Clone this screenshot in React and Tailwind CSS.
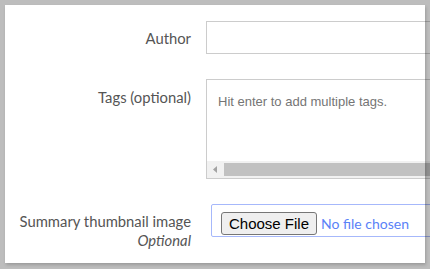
export default function App() {
  return (
    <div className="relative w-[430px] h-[269px] overflow-hidden bg-white font-['Lato',sans-serif] text-[14.8px] text-[#555]">
      <div className="flex flex-col gap-[25px] pt-[21px]">
        <div className="flex">
          <label className="w-[191px] shrink-0 pt-[7px] text-right leading-5">Author</label>
          <input type="text" className="ml-[15px] h-[33px] w-[260px] shrink-0 border border-[#cccccc] bg-white outline-none" />
        </div>

        <div className="flex">
          <label className="w-[191px] shrink-0 pt-[8px] text-right leading-5">Tags (optional)</label>
          <div className="ml-[15px] flex h-[100px] w-[260px] shrink-0 flex-col border border-[#cccccc] bg-white">
            <textarea
              placeholder="Hit enter to add multiple tags."
              className="flex-1 resize-none overflow-hidden px-[11px] pt-[14px] font-['Liberation_Sans',Arial,sans-serif] text-[13px] leading-[15px] outline-none placeholder:text-[#757575]"
            />
            <div className="flex h-[17px] shrink-0 bg-[#f1f1f1]">
              <div className="flex w-[17px] shrink-0 items-center justify-center">
                <svg width="5" height="7" viewBox="0 0 5 7">
                  <path d="M4 0 L0 3.5 L4 7 Z" fill="#a3a3a3" />
                </svg>
              </div>
              <div className="my-[2px] flex-1 bg-[#c1c1c1]" />
            </div>
          </div>
        </div>

        <div className="flex">
          <div className="w-[191px] shrink-0 pt-[8px] text-right leading-[19px]">
            <div>Summary thumbnail image</div>
            <div className="italic">Optional</div>
          </div>
          <div className="ml-[20px] flex h-[33px] w-[260px] shrink-0 items-start gap-[4px] rounded-[2px] border border-[#a6b8fb] pl-[9px] pt-[7px]">
            <button className="h-[23px] rounded-[3px] border border-[#767676] bg-[#efefef] px-[7px] font-['Liberation_Sans',Arial,sans-serif] text-[15px] leading-[21px] text-black">
              Choose File
            </button>
            <span className="text-[14px] leading-[23px] text-[#5a82f7]">No file chosen</span>
          </div>
        </div>
      </div>

      <div className="pointer-events-none absolute left-[5px] top-[5px] h-[258px] w-[420px] shadow-[1px_2px_3px_rgba(0,0,0,0.18),0_0_0_40px_rgba(0,0,0,0.26)]" />
    </div>
  );
}
